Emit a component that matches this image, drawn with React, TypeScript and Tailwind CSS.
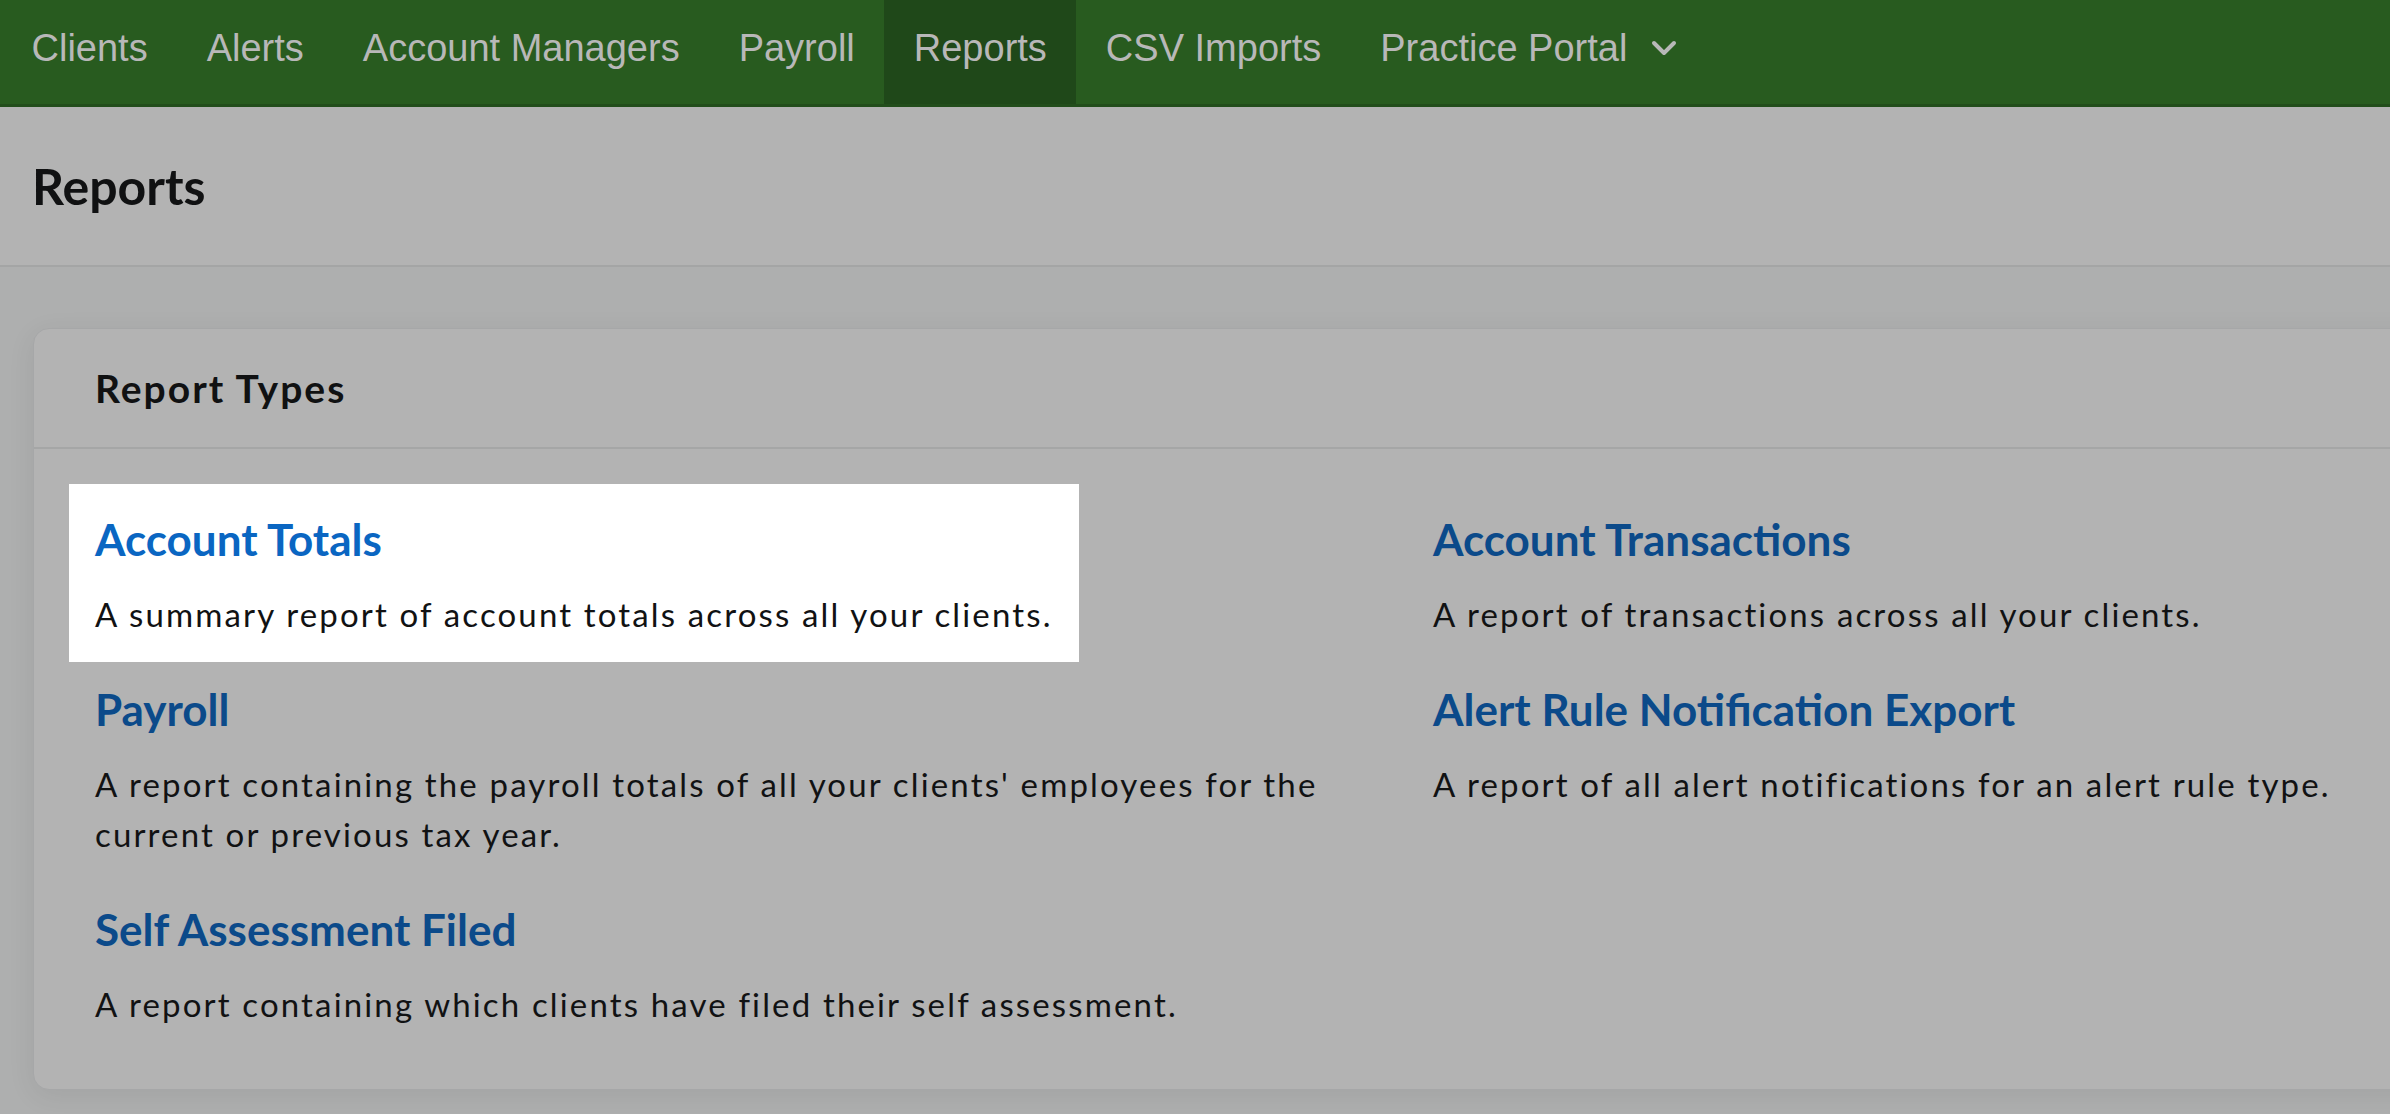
import { useState } from "react";

const navItems = ["Clients", "Alerts", "Account Managers", "Payroll", "Reports", "CSV Imports"];

const reports = [
  {
    title: "Account Totals",
    text: "A summary report of account totals across all your clients.",
    highlight: true,
  },
  {
    title: "Account Transactions",
    text: "A report of transactions across all your clients.",
  },
  {
    title: "Payroll",
    text: "A report containing the payroll totals of all your clients' employees for the current or previous tax year.",
  },
  {
    title: "Alert Rule Notification Export",
    text: "A report of all alert notifications for an alert rule type.",
  },
  {
    title: "Self Assessment Filed",
    text: "A report containing which clients have filed their self assessment.",
  },
];

export default function App() {
  const [active] = useState("Reports");

  return (
    <div className="min-h-screen w-full overflow-hidden bg-[#aeafaf] font-['Lato',sans-serif]">
      {/* Top nav */}
      <nav className="flex h-[107px] items-stretch border-b-[3px] border-[#224d1b] bg-[#285b1f] pl-[2px] font-['Liberation_Sans',Arial,sans-serif] text-[38px] text-[#b8b8b8]">
        {navItems.map((item) => (
          <a
            key={item}
            className={`flex items-center px-[29.5px] pb-[8px] ${item === active ? "bg-[#1f4819]" : ""}`}
          >
            {item}
          </a>
        ))}
        <a className="flex items-center px-[29.5px] pb-[8px]">
          Practice Portal
          <svg width="26" height="16" viewBox="0 0 26 16" className="ml-[24px]" fill="none">
            <polyline
              points="3,3 13,13 23,3"
              stroke="#b8b8b8"
              strokeWidth="4"
              strokeLinecap="round"
              strokeLinejoin="round"
            />
          </svg>
        </a>
      </nav>

      {/* Page header */}
      <div className="flex h-[160px] items-center border-b-2 border-[#a4a5a5] bg-[#b3b3b3] px-[32px]">
        <h1 className="text-[50px] font-bold text-[#101112]">Reports</h1>
      </div>

      {/* Report types card */}
      <div className="ml-[33px] mt-[61px] w-[2740px] rounded-[16px] border border-[#a6a7a8] bg-[#b3b3b3] shadow-[0_6px_28px_rgba(0,0,0,0.07)]">
        <div className="flex h-[120px] items-center border-b-2 border-[#a5a6a6] px-[61px]">
          <h2 className="text-[39px] font-bold tracking-[2px] text-[#101112]">Report Types</h2>
        </div>
        <div className="grid grid-cols-[1278px_1278px] gap-x-[60px] gap-y-[42px] px-[61px] pb-[60px] pt-[62px]">
          {reports.map((r) => (
            <div
              key={r.title}
              className={
                r.highlight
                  ? "-mx-[26px] -mb-[23px] -mt-[27px] w-fit bg-white px-[26px] pb-[23px] pt-[27px]"
                  : ""
              }
            >
              <a
                className={`block text-[44px] font-bold leading-[56px] ${
                  r.highlight ? "text-[#0a66c2]" : "text-[#0b4a8a]"
                }`}
              >
                {r.title}
              </a>
              <p className="mt-[22px] text-[33px] leading-[50px] tracking-[2.15px] text-[#111213]">{r.text}</p>
            </div>
          ))}
        </div>
      </div>
    </div>
  );
}
